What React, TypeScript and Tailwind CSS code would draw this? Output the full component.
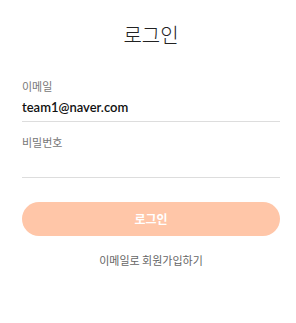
export default function App() {
  return (
    <div
      className="w-[296px] h-[323px] bg-white pl-[22px] pr-[16px] pt-[22px]"
      style={{ fontFamily: '"Noto Sans CJK KR", "Noto Sans", sans-serif' }}
    >
      <h1 className="text-center text-[20px] leading-[26px] text-[#222] font-light">로그인</h1>

      <div className="mt-[31px]">
        <label className="block text-[11px] leading-[14px] text-[#777]">이메일</label>
        <div
          className="h-[26px] mt-[3px] pt-[1px] text-[13px] leading-[20px] font-semibold text-[#111] border-b border-[#ddd]"
          style={{ fontFamily: 'Lato, "Noto Sans CJK KR", sans-serif' }}
        >
          team1@naver.com
        </div>
      </div>

      <div className="mt-[13px]">
        <label className="block text-[11px] leading-[14px] text-[#777]">비밀번호</label>
        <div className="h-[29px] border-b border-[#ddd]" />
      </div>

      <button className="mt-[24px] w-full h-[34px] rounded-full bg-[#ffc6a8] text-white text-[12px] font-bold">
        로그인
      </button>

      <p className="mt-[17px] text-center text-[11px] leading-[14px] text-[#666]">이메일로 회원가입하기</p>
    </div>
  )
}
